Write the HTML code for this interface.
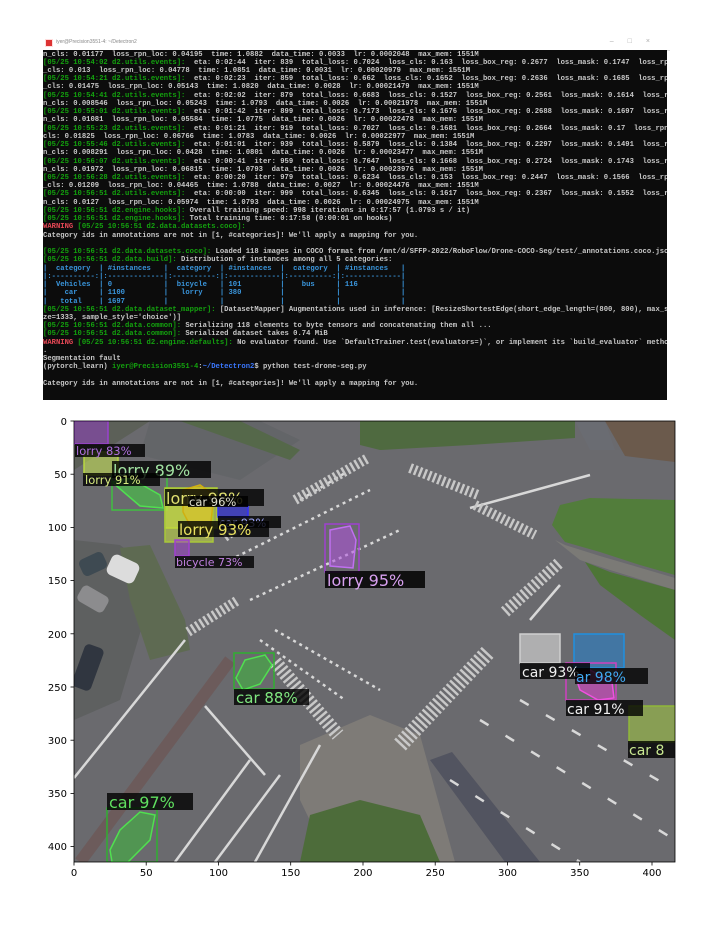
<!DOCTYPE html>
<html><head><meta charset="utf-8">
<style>
html,body{margin:0;padding:0;background:#fff;width:722px;height:932px;overflow:hidden;position:relative}
#title{position:absolute;left:43px;top:37px;width:627px;height:13px;background:#fff;border-bottom:1px solid #ddd}
#title .ic{position:absolute;left:2px;top:2px;width:6px;height:6px;background:#d33;border:1px solid #fdd}
#title .t{position:absolute;left:13px;top:2px;font:5px "Liberation Sans",sans-serif;color:#888}
#title .c{position:absolute;right:6px;top:1px;font:7px "Liberation Sans",sans-serif;color:#aaa;letter-spacing:14px}
#term{position:absolute;left:43px;top:50px;width:624px;height:350px;background:#0c0c0c;overflow:hidden}
#term pre{margin:0;padding:0.5px 0 0 0;font:bold 7.2px/8.23px "Liberation Mono",monospace;color:#c8c8c8;white-space:pre}
.g{color:#13a10e}.r{color:#e74856}.b{color:#3a96dd}.bl{color:#3b78ff}
svg text{font-family:"DejaVu Sans",sans-serif}
</style></head><body>
<div id="title"><div class="ic"></div><div class="t">iyer@Precision3551-4: ~/Detectron2</div><div class="c">–□×</div></div>
<div id="term"><pre>n_cls: 0.01177  loss_rpn_loc: 0.04195  time: 1.0882  data_time: 0.0033  lr: 0.0002048  max_mem: 1551M
<span class="g">[05/25 10:54:02 d2.utils.events]:</span>  eta: 0:02:44  iter: 839  total_loss: 0.7024  loss_cls: 0.163  loss_box_reg: 0.2677  loss_mask: 0.1747  loss_rpn_cls
_cls: 0.013  loss_rpn_loc: 0.04778  time: 1.0851  data_time: 0.0031  lr: 0.00020979  max_mem: 1551M
<span class="g">[05/25 10:54:21 d2.utils.events]:</span>  eta: 0:02:23  iter: 859  total_loss: 0.662  loss_cls: 0.1652  loss_box_reg: 0.2636  loss_mask: 0.1685  loss_rpn_cls
_cls: 0.01475  loss_rpn_loc: 0.05143  time: 1.0820  data_time: 0.0028  lr: 0.00021479  max_mem: 1551M
<span class="g">[05/25 10:54:41 d2.utils.events]:</span>  eta: 0:02:02  iter: 879  total_loss: 0.6683  loss_cls: 0.1527  loss_box_reg: 0.2561  loss_mask: 0.1614  loss_rpn
n_cls: 0.008546  loss_rpn_loc: 0.05243  time: 1.0793  data_time: 0.0026  lr: 0.00021978  max_mem: 1551M
<span class="g">[05/25 10:55:01 d2.utils.events]:</span>  eta: 0:01:42  iter: 899  total_loss: 0.7173  loss_cls: 0.1676  loss_box_reg: 0.2688  loss_mask: 0.1697  loss_rpn
n_cls: 0.01081  loss_rpn_loc: 0.05584  time: 1.0775  data_time: 0.0026  lr: 0.00022478  max_mem: 1551M
<span class="g">[05/25 10:55:23 d2.utils.events]:</span>  eta: 0:01:21  iter: 919  total_loss: 0.7027  loss_cls: 0.1681  loss_box_reg: 0.2664  loss_mask: 0.17  loss_rpn_cls
cls: 0.01825  loss_rpn_loc: 0.06766  time: 1.0783  data_time: 0.0026  lr: 0.00022977  max_mem: 1551M
<span class="g">[05/25 10:55:46 d2.utils.events]:</span>  eta: 0:01:01  iter: 939  total_loss: 0.5879  loss_cls: 0.1384  loss_box_reg: 0.2297  loss_mask: 0.1491  loss_rpn
n_cls: 0.008291  loss_rpn_loc: 0.0428  time: 1.0801  data_time: 0.0026  lr: 0.00023477  max_mem: 1551M
<span class="g">[05/25 10:56:07 d2.utils.events]:</span>  eta: 0:00:41  iter: 959  total_loss: 0.7647  loss_cls: 0.1668  loss_box_reg: 0.2724  loss_mask: 0.1743  loss_rpn
n_cls: 0.01972  loss_rpn_loc: 0.06815  time: 1.0793  data_time: 0.0026  lr: 0.00023976  max_mem: 1551M
<span class="g">[05/25 10:56:28 d2.utils.events]:</span>  eta: 0:00:20  iter: 979  total_loss: 0.6234  loss_cls: 0.153  loss_box_reg: 0.2447  loss_mask: 0.1566  loss_rpn_cls
_cls: 0.01209  loss_rpn_loc: 0.04465  time: 1.0788  data_time: 0.0027  lr: 0.00024476  max_mem: 1551M
<span class="g">[05/25 10:56:51 d2.utils.events]:</span>  eta: 0:00:00  iter: 999  total_loss: 0.6345  loss_cls: 0.1617  loss_box_reg: 0.2367  loss_mask: 0.1552  loss_rpn
n_cls: 0.0127  loss_rpn_loc: 0.05974  time: 1.0793  data_time: 0.0026  lr: 0.00024975  max_mem: 1551M
<span class="g">[05/25 10:56:51 d2.engine.hooks]:</span> Overall training speed: 998 iterations in 0:17:57 (1.0793 s / it)
<span class="g">[05/25 10:56:51 d2.engine.hooks]:</span> Total training time: 0:17:58 (0:00:01 on hooks)
<span class="r">WARNING</span> <span class="g">[05/25 10:56:51 d2.data.datasets.coco]:</span>
Category ids in annotations are not in [1, #categories]! We'll apply a mapping for you.

<span class="g">[05/25 10:56:51 d2.data.datasets.coco]:</span> Loaded 118 images in COCO format from /mnt/d/SFFP-2022/RoboFlow/Drone-COCO-Seg/test/_annotations.coco.json
<span class="g">[05/25 10:56:51 d2.data.build]:</span> Distribution of instances among all 5 categories:
<span class="b">|  category  | #instances   |  category  | #instances  |  category  | #instances   |
|:----------:|:-------------|:----------:|:------------|:----------:|:-------------|
|  Vehicles  | 0            |  bicycle   | 101         |    bus     | 116          |
|    car     | 1100         |   lorry    | 380         |            |              |
|   total    | 1697         |            |             |            |              |</span>
<span class="g">[05/25 10:56:51 d2.data.dataset_mapper]:</span> [DatasetMapper] Augmentations used in inference: [ResizeShortestEdge(short_edge_length=(800, 800), max_size
ze=1333, sample_style='choice')]
<span class="g">[05/25 10:56:51 d2.data.common]:</span> Serializing 118 elements to byte tensors and concatenating them all ...
<span class="g">[05/25 10:56:51 d2.data.common]:</span> Serialized dataset takes 0.74 MiB
<span class="r">WARNING</span> <span class="g">[05/25 10:56:51 d2.engine.defaults]:</span> No evaluator found. Use `DefaultTrainer.test(evaluators=)`, or implement its `build_evaluator` method
.
Segmentation fault
(pytorch_learn) <span class="g">iyer@Precision3551-4</span>:<span class="bl">~/Detectron2</span>$ python test-drone-seg.py

Category ids in annotations are not in [1, #categories]! We'll apply a mapping for you.</pre></div>

<svg width="722" height="932" style="position:absolute;left:0;top:0" xmlns="http://www.w3.org/2000/svg">
<defs><clipPath id="cp"><rect x="74" y="421" width="601" height="441"/></clipPath></defs>
<g clip-path="url(#cp)">
<rect x="74" y="421" width="601" height="441" fill="#6a6a6e"/>
<polygon points="74,421 150,421 74,470" fill="#5c6058"/>
<polygon points="150,421 260,421 300,440 240,480 140,455" fill="#636568"/>
<polygon points="180,421 240,421 300,450 290,460" fill="#55684a"/>
<polygon points="360,421 575,421 575,438 470,445 380,450 360,445" fill="#4f6a40"/>
<polygon points="575,421 605,421 615,450 590,450" fill="#6a6c72"/>
<polygon points="605,421 675,421 675,462 625,456" fill="#6b5a4c"/>
<polygon points="552,525 560,505 590,498 675,500 675,575 640,565 600,552 565,542" fill="#527d3b"/>
<polygon points="555,540 565,545 600,556 675,578 675,590 610,570 580,560" fill="#7b7a76"/>
<polygon points="585,562 610,572 675,590 675,640 640,615 600,585" fill="#4d7536"/>
<polygon points="74,540 120,545 140,560 150,600 120,700 74,720" fill="#5e6060"/>
<polygon points="120,548 150,545 185,620 190,650 150,660 130,600" fill="#5e6a52"/>
<rect x="108" y="558" width="30" height="22" rx="6" fill="#dcdcdc" transform="rotate(25 123 569)"/>
<rect x="80" y="555" width="26" height="18" rx="5" fill="#3e4a52" transform="rotate(-25 93 564)"/>
<rect x="78" y="590" width="30" height="18" rx="5" fill="#8c8c8e" transform="rotate(30 93 599)"/>
<rect x="78" y="645" width="20" height="45" rx="5" fill="#303640" transform="rotate(20 88 667)"/>
<line x1="230" y1="660" x2="80" y2="862" stroke="#6c5b5b" stroke-width="12"/>
<polygon points="300,745 370,715 420,735 455,862 330,862 300,800" fill="#7e7b77"/>
<polygon points="310,815 360,800 420,815 440,862 300,862" fill="#4d6c3a"/>
<polygon points="430,760 452,752 540,862 505,862" fill="#525460"/>
<g stroke="#d8d8d8" stroke-width="2.5" fill="none">
<line x1="74" y1="778" x2="185" y2="640"/>
<line x1="205" y1="706" x2="265" y2="775"/>
<line x1="175" y1="862" x2="250" y2="760"/>
<line x1="215" y1="862" x2="280" y2="775"/>
<line x1="255" y1="862" x2="320" y2="745"/>
<line x1="300" y1="500" x2="350" y2="470" stroke-dasharray="4 4"/>
<line x1="230" y1="560" x2="370" y2="490" stroke-dasharray="3 4"/>
<line x1="250" y1="600" x2="400" y2="530" stroke-dasharray="3 4"/>
<line x1="260" y1="640" x2="345" y2="700" stroke-dasharray="3 4"/>
<line x1="275" y1="630" x2="380" y2="690" stroke-dasharray="3 4"/>
<line x1="480" y1="720" x2="675" y2="840" stroke-dasharray="10 20"/>
<line x1="520" y1="700" x2="675" y2="790" stroke-dasharray="10 20"/>
<line x1="450" y1="780" x2="580" y2="862" stroke-dasharray="10 20"/>
<line x1="470" y1="508" x2="590" y2="475"/>
<line x1="530" y1="620" x2="560" y2="585"/>
</g>
<g stroke="#c8c8c8" fill="none" stroke-dasharray="2.5 2.5">
<line x1="295" y1="500" x2="368" y2="458" stroke-width="10"/>
<line x1="410" y1="468" x2="478" y2="495" stroke-width="10"/>
<line x1="475" y1="505" x2="535" y2="535" stroke-width="10"/>
<line x1="505" y1="612" x2="560" y2="562" stroke-width="12"/>
<line x1="400" y1="745" x2="488" y2="652" stroke-width="16"/>
<line x1="188" y1="632" x2="238" y2="600" stroke-width="10"/>
<line x1="275" y1="662" x2="338" y2="735" stroke-width="14"/>
<line x1="225" y1="538" x2="250" y2="520" stroke-width="8"/>
</g>
<g fill-opacity="0.55" stroke-width="1.5">
<rect x="74" y="421" width="34" height="23" fill="#9040c0" stroke="#9a40d0"/>
<rect x="84" y="452" width="34" height="23" fill="#c8e850" stroke="#b8d840"/>
<polygon points="112,482 130,478 160,495 163,508 140,506" fill="#40d040" stroke="#50e050"/>
<rect x="112" y="475" width="55" height="35" fill="none" stroke="#40c040"/>
<rect x="165" y="488" width="52" height="40" fill="#c8e040" stroke="#b0d030"/>
<rect x="165" y="505" width="48" height="37" fill="#c8e040" stroke="#a8c838"/>
<polygon points="183,490 200,485 214,495 210,530 195,535 183,512" fill="#e0c020" stroke="#d0b010"/>
<rect x="218" y="505" width="30" height="12" fill="#2020f0" stroke="#3030ff"/>
<rect x="175" y="540" width="14" height="16" fill="#9a40c8" stroke="#a040d0"/>
<rect x="325" y="524" width="34" height="48" fill="none" stroke="#a040d0"/>
<polygon points="330,530 350,526 356,540 353,568 330,566" fill="#b050e0" stroke="#c070f0"/>
<rect x="234" y="653" width="40" height="36" fill="none" stroke="#30b030"/>
<polygon points="236,678 245,660 265,655 272,665 260,684 243,690" fill="#3cb83c" stroke="#50e050"/>
<rect x="107" y="808" width="50" height="54" fill="none" stroke="#30b030"/>
<polygon points="110,850 120,830 140,812 155,815 150,840 128,862 112,862" fill="#3cb83c" stroke="#50e050"/>
<rect x="520" y="634" width="40" height="29" fill="#e8e8e8" stroke="#cfcfcf"/>
<rect x="574" y="634" width="50" height="34" fill="#2080d0" stroke="#2090e0"/>
<rect x="566" y="663" width="50" height="37" fill="none" stroke="#d040c0"/>
<polygon points="575,675 590,670 612,682 614,698 598,700 580,690" fill="#e040d0" stroke="#f050e0"/>
<rect x="629" y="706" width="46" height="36" fill="#a0c840" stroke="#90b838"/>
</g>
<g>
<rect x="75" y="444" width="70" height="13" fill="#000" fill-opacity="0.8"/><text x="76" y="455" font-size="11.5" fill="#b070e0">lorry 83%</text>
<rect x="112" y="461" width="99" height="17" fill="#000" fill-opacity="0.8"/><text x="113" y="476" font-size="16" fill="#a0e0a0">lorry 89%</text>
<rect x="83" y="473" width="77" height="13" fill="#000" fill-opacity="0.8"/><text x="85" y="484" font-size="11.5" fill="#d8ec80">lorry 91%</text>
<rect x="165" y="489" width="99" height="17" fill="#000" fill-opacity="0.8"/><text x="166" y="504" font-size="16" fill="#e0e070">lorry 98%</text>
<rect x="188" y="496" width="60" height="11" fill="#000" fill-opacity="0.85"/><text x="189" y="506" font-size="11.5" fill="#e0e0d0">car 96%</text>
<rect x="218" y="516" width="63" height="12" fill="#000" fill-opacity="0.8"/><text x="219" y="527" font-size="11.5" fill="#a0a8ff">car 93%</text>
<rect x="178" y="521" width="91" height="16" fill="#000" fill-opacity="0.8"/><text x="179" y="535" font-size="15" fill="#e8e060">lorry 93%</text>
<rect x="175" y="556" width="79" height="12" fill="#000" fill-opacity="0.8"/><text x="176" y="566" font-size="11" fill="#c080e0">bicycle 73%</text>
<rect x="325" y="571" width="100" height="17" fill="#000" fill-opacity="0.85"/><text x="327" y="586" font-size="16" fill="#d8a0f0">lorry 95%</text>
<rect x="234" y="689" width="75" height="16" fill="#000" fill-opacity="0.8"/><text x="236" y="703" font-size="15" fill="#80e880">car 88%</text>
<rect x="107" y="793" width="86" height="17" fill="#000" fill-opacity="0.8"/><text x="109" y="808" font-size="16" fill="#60e060">car 97%</text>
<rect x="520" y="663" width="70" height="16" fill="#000" fill-opacity="0.8"/><text x="522" y="677" font-size="14" fill="#f0f0f0">car 93%</text>
<rect x="575" y="668" width="73" height="16" fill="#000" fill-opacity="0.8"/><text x="576" y="682" font-size="14" fill="#40a8f0">ar 98%</text>
<rect x="566" y="700" width="77" height="16" fill="#000" fill-opacity="0.8"/><text x="567" y="714" font-size="14" fill="#f0f0f0">car 91%</text>
<rect x="628" y="741" width="47" height="17" fill="#000" fill-opacity="0.8"/><text x="629" y="755" font-size="14" fill="#c8e890">car 8</text>
</g>
</g>
<rect x="74" y="421" width="601" height="441" fill="none" stroke="#000" stroke-width="0.8"/>
<g stroke="#000" stroke-width="0.8">
<line x1="70.5" y1="421" x2="74" y2="421"/><line x1="70.5" y1="474.2" x2="74" y2="474.2"/><line x1="70.5" y1="527.4" x2="74" y2="527.4"/><line x1="70.5" y1="580.6" x2="74" y2="580.6"/><line x1="70.5" y1="633.8" x2="74" y2="633.8"/><line x1="70.5" y1="687" x2="74" y2="687"/><line x1="70.5" y1="740.2" x2="74" y2="740.2"/><line x1="70.5" y1="793.4" x2="74" y2="793.4"/><line x1="70.5" y1="846.6" x2="74" y2="846.6"/>
<line x1="74" y1="862" x2="74" y2="865.5"/><line x1="146.2" y1="862" x2="146.2" y2="865.5"/><line x1="218.5" y1="862" x2="218.5" y2="865.5"/><line x1="290.7" y1="862" x2="290.7" y2="865.5"/><line x1="363" y1="862" x2="363" y2="865.5"/><line x1="435.2" y1="862" x2="435.2" y2="865.5"/><line x1="507.5" y1="862" x2="507.5" y2="865.5"/><line x1="579.7" y1="862" x2="579.7" y2="865.5"/><line x1="652" y1="862" x2="652" y2="865.5"/>
</g>
<g font-size="10" fill="#000" text-anchor="end">
<text x="67" y="425">0</text><text x="67" y="478">50</text><text x="67" y="531">100</text><text x="67" y="584">150</text><text x="67" y="638">200</text><text x="67" y="691">250</text><text x="67" y="744">300</text><text x="67" y="797">350</text><text x="67" y="850">400</text>
</g>
<g font-size="10" fill="#000" text-anchor="middle">
<text x="74" y="876">0</text><text x="146.2" y="876">50</text><text x="218.5" y="876">100</text><text x="290.7" y="876">150</text><text x="363" y="876">200</text><text x="435.2" y="876">250</text><text x="507.5" y="876">300</text><text x="579.7" y="876">350</text><text x="652" y="876">400</text>
</g>
</svg>
</body></html>
